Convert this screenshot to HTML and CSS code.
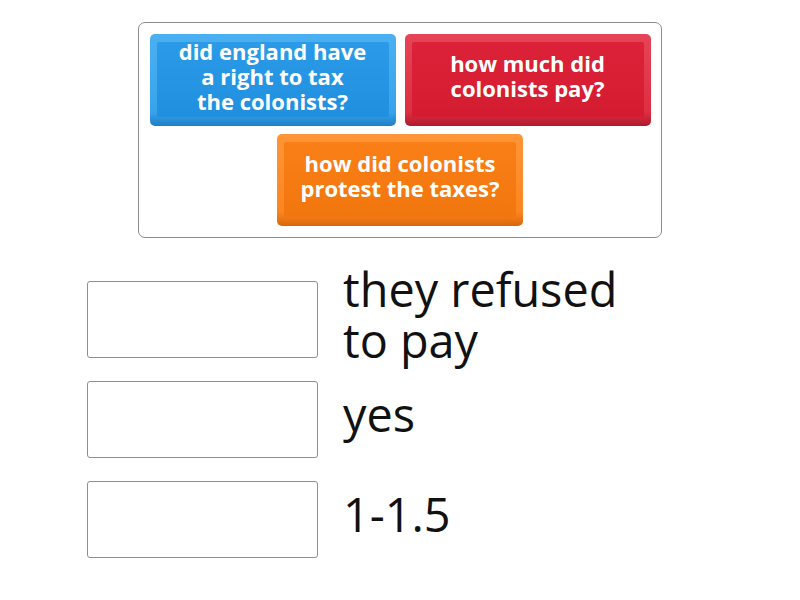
FILE: index.html
```html
<!DOCTYPE html>
<html>
<head>
<meta charset="utf-8">
<link rel="stylesheet" href="styles.css">
</head>
<body>
<div class="page">
  <div class="bank">
    <div class="tile blue"><div class="face">did england have<br>a right to tax<br>the colonists?</div></div>
    <div class="tile red"><div class="face">how much did<br>colonists pay?</div></div>
    <div class="tile orange"><div class="face">how did colonists<br>protest the taxes?</div></div>
  </div>
  <div class="rows">
    <div class="row"><div class="slot"></div><div class="answer">they refused<br>to pay</div></div>
    <div class="row"><div class="slot"></div><div class="answer">yes</div></div>
    <div class="row"><div class="slot"></div><div class="answer">1-1.5</div></div>
  </div>
</div>
</body>
</html>
```
FILE: styles.css
```css
html, body {
  margin: 0;
  padding: 0;
  background: #ffffff;
}
body {
  font-family: "Open Sans", "Liberation Sans", sans-serif;
  width: 800px;
  height: 600px;
  overflow: hidden;
}
.page {
  padding-top: 22px;
}
.bank {
  box-sizing: border-box;
  margin-left: 138px;
  width: 524px;
  height: 216px;
  border: 1px solid #8c8c8c;
  border-radius: 7px;
  padding: 11px 10px 10px 10px;
  display: flex;
  flex-wrap: wrap;
  justify-content: center;
  align-content: flex-start;
  gap: 8px 9px;
}
.tile {
  box-sizing: border-box;
  width: 246px;
  height: 92px;
  border-radius: 5px;
  padding: 8px 7px 9px 7px;
  display: flex;
}
.face {
  flex: 1;
  border-radius: 2px;
  display: flex;
  align-items: center;
  justify-content: center;
  text-align: center;
  color: #ffffff;
  font-weight: 700;
  font-size: 22px;
  line-height: 25px;
  padding-bottom: 7px;
  white-space: nowrap;
}
.blue {
  background: linear-gradient(#4bb0f2, #38a3ec 85%, #1f7fc4 100%);
}
.blue .face {
  background: linear-gradient(#2b9be8, #1f8fdf);
}
.red {
  background: linear-gradient(#e54557, #de2e43 85%, #b01a2c 100%);
}
.red .face {
  background: linear-gradient(#dc2238, #d41c31);
}
.orange {
  background: linear-gradient(#ff9536, #fb8520 85%, #d9660a 100%);
}
.orange .face {
  background: linear-gradient(#f97f16, #f2760e);
}
.rows {
  margin-top: 43px;
  margin-left: 87px;
  display: flex;
  flex-direction: column;
  gap: 23px;
}
.row {
  height: 77px;
  display: flex;
  align-items: center;
  gap: 25px;
}
.slot {
  box-sizing: border-box;
  width: 231px;
  height: 77px;
  border: 1px solid #8f8f8f;
  border-radius: 3px;
  background: #ffffff;
  flex: none;
}
.answer {
  font-size: 46.8px;
  line-height: 51px;
  padding-bottom: 10px;
  color: #111111;
  white-space: nowrap;
}
```
